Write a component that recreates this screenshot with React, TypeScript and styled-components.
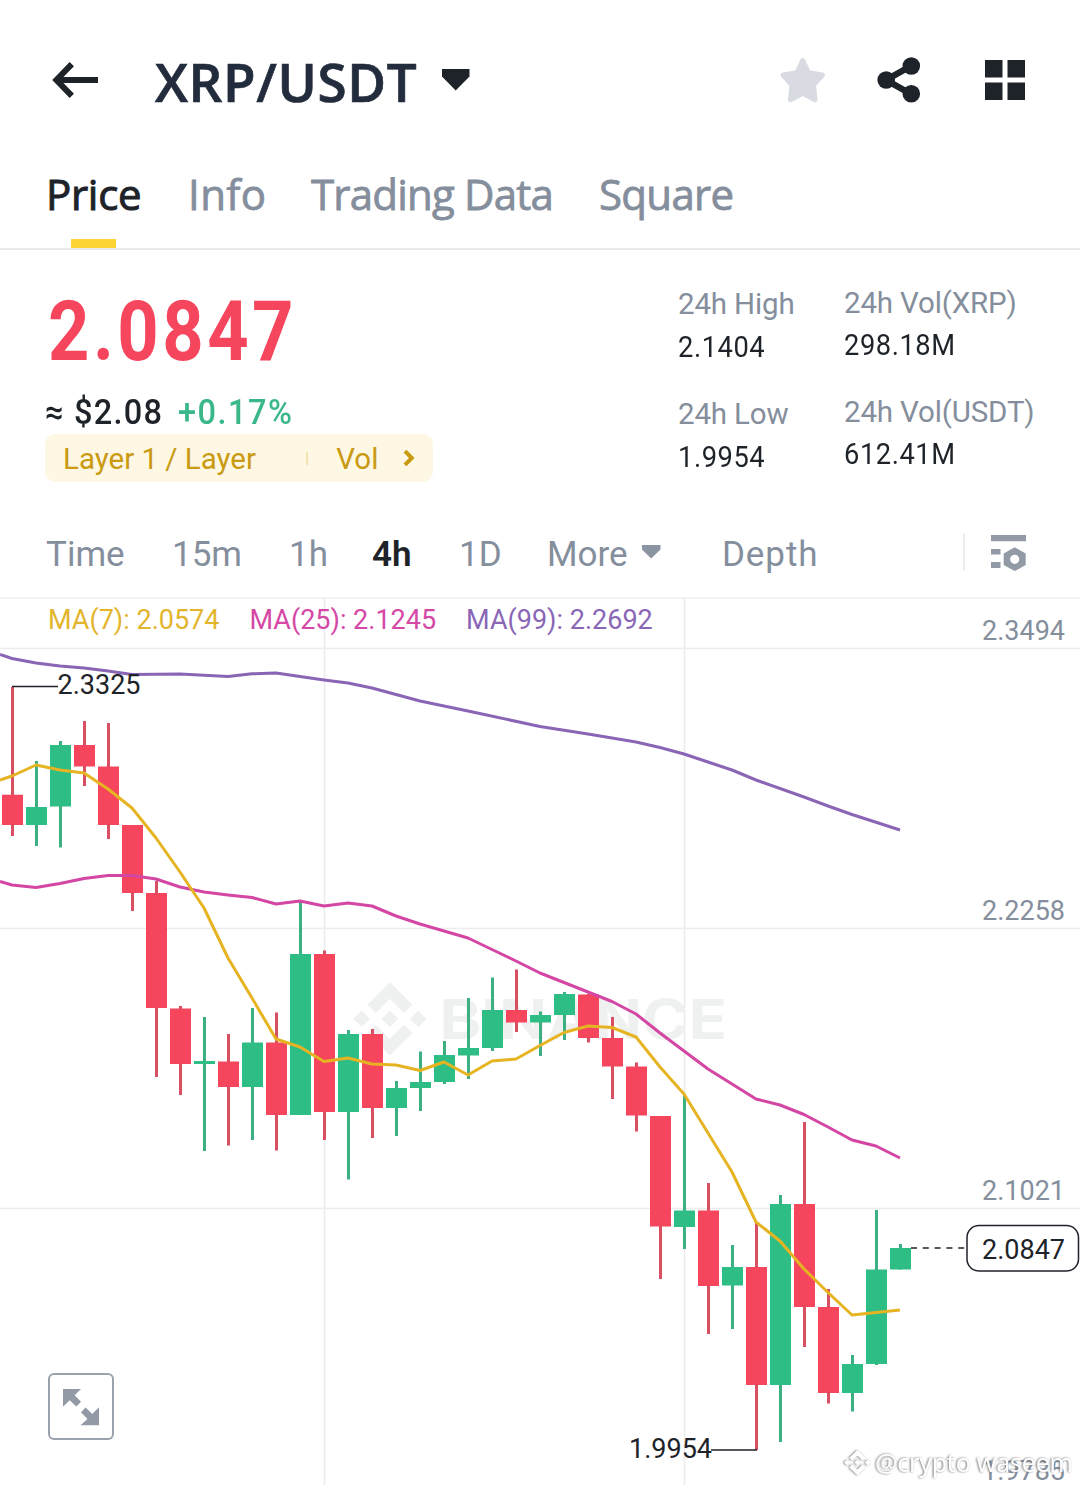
import React from "react";
import styled, { createGlobalStyle } from "styled-components";

const UP = "#2ebd85";
const DOWN = "#f6465d";
const INK = "#1e2329";
const MUTED = "#848e9c";

const GlobalStyle = createGlobalStyle`
  *, *::before, *::after { box-sizing: border-box; }
  html, body { margin: 0; padding: 0; background: #fff; }
`;

const Screen = styled.main`
  display: flex;
  flex-direction: column;
  width: 1080px;
  height: 1485px;
  overflow: hidden;
  background: #fff;
  color: ${INK};
  font-family: Roboto, "Liberation Sans", sans-serif;
  white-space: pre;
`;

const Header = styled.header`
  display: flex;
  align-items: center;
  height: 160px;
  padding: 0 54px 0 52px;
`;

const PairTitle = styled.h1`
  width: 269px;
  margin: 3px 18px 0 56px;
  font-family: "Open Sans", "Noto Sans", sans-serif;
  font-size: 53px;
  font-weight: 600;
  line-height: 72px;
  letter-spacing: 0.6px;
  color: #222c3c;
  -webkit-text-stroke: 0.7px #222c3c;
`;

const HeaderActions = styled.div`
  display: flex;
  align-items: center;
  gap: 51px;
  margin-left: auto;
  svg:last-child { margin-left: 12px; }
`;

const Tabs = styled.nav`
  display: flex;
  height: 90px;
  padding-left: 46px;
  border-bottom: 2px solid #e9eaec;
`;

const Tab = styled.div<{ $width: number; $active?: boolean; $spacing?: number }>`
  display: flex;
  flex: 0 0 ${(p) => p.$width}px;
  flex-direction: column;
  justify-content: space-between;
  font-family: "Open Sans", "Noto Sans", sans-serif;
  font-size: 42px;
  font-weight: 400;
  line-height: 67px;
  letter-spacing: ${(p) => p.$spacing ?? 0}px;
  color: ${(p) => (p.$active ? INK : MUTED)};
  -webkit-text-stroke: ${(p) => (p.$active ? 1 : 0.8)}px currentColor;
`;

const TabMarker = styled.span`
  width: 45px;
  height: 9px;
  margin-left: 25px;
  background: #fcd535;
`;

const Summary = styled.section`
  display: flex;
  height: 259px;
`;

const PriceColumn = styled.div`
  display: flex;
  flex-direction: column;
  align-items: flex-start;
  width: 678px;
  padding: 40px 0 0 45px;
`;

const LastPrice = styled.div`
  margin-left: 3px;
  font-size: 83px;
  font-weight: 700;
  line-height: 84px;
  letter-spacing: 4px;
  transform: scaleX(0.87);
  transform-origin: left center;
  color: ${DOWN};
`;

const FiatRow = styled.div`
  display: flex;
  height: 60px;
  padding-top: 17px;
  font-size: 35px;
  font-weight: 500;
  line-height: 44px;
`;

const FiatPrice = styled.span`
  width: 133px;
  letter-spacing: 1.3px;
  transform: scaleX(0.93);
  transform-origin: left center;
`;

const Change = styled.span`
  letter-spacing: 1.6px;
  color: #3bb88a;
  transform: scaleX(0.93);
  transform-origin: left center;
`;

const TagPill = styled.div`
  display: flex;
  align-items: center;
  width: 388px;
  height: 48px;
  padding: 0 18px;
  border-radius: 10px;
  background: #fef7e3;
  color: #c99a12;
  font-size: 29.5px;
  line-height: 46px;
`;

const TagName = styled.span`
  width: 244px;
  padding-top: 2px;
`;

const TagDivider = styled.span`
  width: 2px;
  height: 13px;
  margin-right: 28px;
  background: #f3e3b0;
`;

const TagMetric = styled.span`
  width: 67px;
  padding-top: 2px;
`;

const StatColumn = styled.dl<{ $width: number; $top: number; $valueHeight: number }>`
  width: ${(p) => p.$width}px;
  margin: 0;
  padding-top: ${(p) => p.$top}px;
  dd { line-height: ${(p) => p.$valueHeight}px; }
`;

const StatLabel = styled.dt`
  font-size: 29.5px;
  line-height: 44px;
  letter-spacing: -0.15px;
  color: ${MUTED};
`;

const StatValue = styled.dd`
  margin: 0 0 24px;
  font-size: 29.5px;
  letter-spacing: 0.6px;
  transform: scaleX(0.925);
  transform-origin: left center;
`;

const Toolbar = styled.div`
  display: flex;
  align-items: center;
  height: 90px;
  padding: 4px 53px 0 46px;
  border-bottom: 2px solid #f1f2f3;
  > svg { margin-top: -5px; }
`;

const Interval = styled.div<{ $width: number; $active?: boolean; $spacing?: number }>`
  display: flex;
  align-items: center;
  flex: 0 0 ${(p) => p.$width}px;
  font-size: 35px;
  font-weight: ${(p) => (p.$active ? 600 : 400)};
  line-height: 44px;
  letter-spacing: ${(p) => p.$spacing ?? 0}px;
  color: ${(p) => (p.$active ? INK : MUTED)};
  svg { margin: -6px 0 0 14px; }
`;

const ToolbarDivider = styled.span`
  width: 2px;
  height: 36px;
  margin: -6px 26px 0 auto;
  background: #eaecef;
`;

const ChartArea = styled.section`
  position: relative;
  height: 886px;
`;

const ChartSvg = styled.svg`
  display: block;
  font-family: Roboto, sans-serif;
`;

const Legend = styled.div`
  position: absolute;
  top: 5px;
  left: 48px;
  display: flex;
  gap: 30px;
  font-size: 27px;
  line-height: 32px;
`;

const LegendItem = styled.span<{ $color: string }>`
  color: ${(p) => p.$color};
`;

const ExpandButton = styled.button`
  position: absolute;
  top: 774px;
  left: 48px;
  display: grid;
  place-items: center;
  width: 66px;
  height: 67px;
  padding: 0;
  border: 2px solid #9aa2ad;
  border-radius: 6px;
  background: #fff;
`;

const BINANCE_MARK =
  "M16.624 13.9202l2.7175 2.7154-7.353 7.353-7.353-7.352 2.7175-2.7164 4.6355 4.6595 4.6356-4.6595zm4.6366-4.6366L24 12l-2.7154 2.7164L18.5682 12l2.6924-2.7164zm-9.272.001l2.7163 2.6914-2.7164 2.7174v-.001L9.2721 12l2.7164-2.7154zm-9.2722-.001L5.4088 12l-2.6914 2.6924L0 12l2.7164-2.7164zM11.9885.0115l7.353 7.329-2.7174 2.7154-4.6356-4.6356-4.6355 4.6595-2.7174-2.7154 7.353-7.353z";

// [rising, high, body top, body bottom, low] in chart pixels
type Candle = [boolean, number, number, number, number];
const candles: Candle[] = [
  [false, 687, 794.7, 825, 836],
  [true, 761, 807, 825, 846],
  [true, 741, 745, 806.5, 847.5],
  [false, 721, 745, 766.5, 786],
  [false, 723, 766.5, 825, 839],
  [false, 825, 825, 893, 911],
  [false, 881, 893, 1008, 1077],
  [false, 1006, 1008.5, 1064, 1095],
  [true, 1017, 1061, 1064, 1151],
  [false, 1034, 1061.5, 1087, 1145.5],
  [true, 1008, 1042.5, 1087, 1140],
  [false, 1012.5, 1042.5, 1115, 1150.5],
  [true, 902, 954, 1115, 1115],
  [false, 950.5, 954, 1112, 1140],
  [true, 1030, 1034, 1112, 1179.5],
  [false, 1029, 1034, 1108, 1138],
  [true, 1081, 1088, 1108, 1136],
  [true, 1051.5, 1082, 1088, 1111],
  [true, 1041, 1055, 1082, 1084],
  [true, 998, 1048, 1055.5, 1079],
  [true, 977.5, 1010, 1048, 1051],
  [false, 969.5, 1010, 1022.5, 1032],
  [true, 1011.5, 1015, 1022.5, 1056],
  [true, 992, 994, 1015, 1040],
  [false, 994, 994.5, 1038, 1042.5],
  [false, 1017, 1038, 1066.5, 1099],
  [false, 1062.5, 1066.5, 1115.5, 1131.5],
  [false, 1116, 1116, 1226.5, 1279],
  [true, 1095, 1210.5, 1227, 1249],
  [false, 1183, 1210.5, 1286, 1334],
  [true, 1245, 1267, 1285.5, 1329],
  [false, 1222, 1267, 1385, 1450],
  [true, 1195, 1204, 1385, 1442],
  [false, 1122, 1204, 1307, 1347],
  [false, 1289, 1307, 1393, 1403.5],
  [true, 1355, 1364, 1393, 1411.5],
  [true, 1210, 1269.5, 1364, 1365],
  [true, 1244, 1248, 1269.5, 1269.5],
];

const ma7 =
  "0,780 12,776 36,765 60,770 84,773 108,789 132,808 156,838 180,872 204,908 228,958 252,998 276,1039 300,1047 324,1061.5 348,1058 372,1064 396,1065 420,1070.5 444,1062 468,1075 492,1061 516,1059 540,1045.5 564,1032.5 588,1026 612,1027.5 636,1037 660,1067 684,1094 708,1133 732,1172 756,1222 780,1241 804,1269 828,1292.5 852,1315 876,1312.5 900,1310";
const ma25 =
  "0,881.5 12,885 36,887.5 60,883.5 84,878.5 108,875.5 132,875.5 156,879 180,887 204,892 228,895 252,897.5 276,904 300,901 324,906 348,903 372,906 396,916 420,924 444,931 468,938 492,949.5 516,961 540,973 564,982.5 588,992 612,1001.5 636,1014 660,1033 684,1051 708,1069 732,1084 756,1099 780,1105 804,1114.5 828,1127 852,1140 876,1146 900,1158";
const ma99 =
  "0,654.5 12,658.5 36,663 60,666 84,668 108,671 132,674.5 180,674 228,676.5 252,673.8 276,673 300,676.5 324,680 348,683 372,688 396,694.5 420,701 468,711 540,726.5 588,734 636,742 660,747.5 684,754 708,762 732,770 756,780 804,797 828,806 852,814.5 900,830";

const axisLabels: [string, number][] = [
  ["2.3494", 640],
  ["2.2258", 920],
  ["2.1021", 1200],
  ["1.9785", 1480],
];

function BackIcon() {
  return (
    <svg width="47" height="38" viewBox="52 61 47 38" fill="none" stroke={INK} strokeWidth="6">
      <path d="M98 80H57M71.8 64.2 56.4 80l15.4 15.8" />
    </svg>
  );
}

function StarIcon() {
  return (
    <svg width="46" height="46" viewBox="780 58 46 46" fill="#d8dbe1" stroke="#d8dbe1" strokeWidth="5" strokeLinejoin="round">
      <path d="M802.7 61.5 808.5 73.8 822.3 76 813.5 86 815 100.7 802.7 94.3 790.4 100.7 791.9 86 783.2 76 797 73.8Z" />
    </svg>
  );
}

function ShareIcon() {
  return (
    <svg width="44" height="46" viewBox="877 57 44 46" fill={INK}>
      <path d="M911 66 886 80l25 14" fill="none" stroke={INK} strokeWidth="6.5" />
      <circle cx="911.3" cy="66" r="8.8" />
      <circle cx="886.2" cy="80" r="8.8" />
      <circle cx="911.3" cy="93.8" r="8.8" />
    </svg>
  );
}

function GridIcon() {
  return (
    <svg width="42" height="42" viewBox="984 59 42 42" fill={INK}>
      <path d="M985 60h17.5v17.5H985zM1007.5 60h17.5v17.5h-17.5zM985 82.5h17.5V100H985zM1007.5 82.5h17.5V100h-17.5z" />
    </svg>
  );
}

function IndicatorIcon() {
  return (
    <svg width="36" height="38" viewBox="991 533 36 38" fill="#929aa6">
      <path d="M991 534h35v6.3h-35zM991 548h9.5v5.6H991zM991 561h9.5v6H991z" />
      <path fillRule="evenodd" d="m1014.7 546.3 11 6.1v11.6l-11 6.1-11-6.1v-11.6zm0 7.4a4.6 4.6 0 1 0 0 9.2 4.6 4.6 0 0 0 0-9.2z" />
    </svg>
  );
}

function Chart() {
  return (
    <ChartSvg width="1080" height="886" viewBox="0 599 1080 886">
      <g stroke="#ebecee" strokeWidth="1.6">
        <path d="M0 648.5H1080M0 928.5H1080M0 1208.5H1080M324.5 599V1485M684.5 599V1485" />
      </g>
      <g fill="#eff0f0">
        <path d={BINANCE_MARK} transform="translate(353.3 982.3) scale(3.05)" />
        <text x="439.5" y="1039" fontFamily="Inter, sans-serif" fontSize="55.5" fontWeight="700" textLength="287.5" lengthAdjust="spacingAndGlyphs">
          BINANCE
        </text>
      </g>
      {candles.map(([rising, high, top, bottom, low], i) => (
        <g key={i} fill={rising ? UP : DOWN}>
          <rect x={11 + 24 * i} y={high} width={3} height={low - high} fill={rising ? "#3cb083" : "#d84e63"} />
          <rect x={2 + 24 * i} y={top} width={21} height={bottom - top} />
        </g>
      ))}
      <g fill="none" strokeWidth="3" strokeLinejoin="round">
        <polyline points={ma99} stroke="#8a65b5" />
        <polyline points={ma25} stroke="#d446a4" />
        <polyline points={ma7} stroke="#e6b422" />
      </g>
      <g stroke={INK} strokeWidth="1.7" fill="none">
        <path d="M12 686.5H58M711 1450H757" />
        <path d="M911 1248H966" strokeDasharray="6 5.8" />
      </g>
      <g fontSize="27" fill={INK}>
        <text x="57.5" y="694">2.3325</text>
        <text x="629" y="1458">1.9954</text>
      </g>
      <g fontSize="27" fill={MUTED}>
        {axisLabels.map(([label, y]) => (
          <text key={label} x="982" y={y}>{label}</text>
        ))}
      </g>
      <rect x="967" y="1225.5" width="111.5" height="45.5" rx="12" fill="#fff" stroke={INK} strokeWidth="1.5" />
      <text x="982" y="1259" fontSize="27" fill={INK}>2.0847</text>
      <g fill="#fff" style={{ filter: "drop-shadow(-0.3px 0.5px 0.8px #777)" }}>
        <path d={BINANCE_MARK} transform="translate(844 1450) scale(1.12 1.05)" />
        <text x="875" y="1471.5" fontFamily="'Noto Sans', sans-serif" fontSize="25" textLength="198">
          @crypto waseem
        </text>
      </g>
    </ChartSvg>
  );
}

export default function App() {
  return (
    <>
      <GlobalStyle />
      <Screen>
        <Header>
          <BackIcon />
          <PairTitle>XRP/USDT</PairTitle>
          <svg width="28" height="22" viewBox="0 0 28 22" fill={INK}>
            <path d="M0 0h27.5v7.5L13.7 21.5 0 7.5z" />
          </svg>
          <HeaderActions>
            <StarIcon />
            <ShareIcon />
            <GridIcon />
          </HeaderActions>
        </Header>

        <Tabs>
          <Tab $width={142} $spacing={-0.3} $active>
            Price
            <TabMarker />
          </Tab>
          <Tab $width={123} $spacing={0.4}>Info</Tab>
          <Tab $width={288} $spacing={-0.8}>Trading Data</Tab>
          <Tab $width={160} $spacing={-0.7}>Square</Tab>
        </Tabs>

        <Summary>
          <PriceColumn>
            <LastPrice>2.0847</LastPrice>
            <FiatRow>
              <FiatPrice>≈ $2.08</FiatPrice>
              <Change>+0.17%</Change>
            </FiatRow>
            <TagPill>
              <TagName>Layer 1 / Layer</TagName>
              <TagDivider />
              <TagMetric>Vol</TagMetric>
              <svg width="12" height="18" viewBox="0 0 12 18" fill="none" stroke="#c99a12" strokeWidth="4">
                <path d="m2 2 6.8 7L2 16" />
              </svg>
            </TagPill>
          </PriceColumn>
          <StatColumn $width={166} $top={32} $valueHeight={42}>
            <StatLabel>24h High</StatLabel>
            <StatValue>2.1404</StatValue>
            <StatLabel>24h Low</StatLabel>
            <StatValue>1.9954</StatValue>
          </StatColumn>
          <StatColumn $width={230} $top={31} $valueHeight={41}>
            <StatLabel>24h Vol(XRP)</StatLabel>
            <StatValue>298.18M</StatValue>
            <StatLabel>24h Vol(USDT)</StatLabel>
            <StatValue>612.41M</StatValue>
          </StatColumn>
        </Summary>

        <Toolbar>
          <Interval $width={126}>Time</Interval>
          <Interval $width={117}>15m</Interval>
          <Interval $width={83}>1h</Interval>
          <Interval $width={87} $active>4h</Interval>
          <Interval $width={88}>1D</Interval>
          <Interval $width={175}>
            More
            <svg width="19" height="14" viewBox="0 0 19 14" fill="#8b95a1">
              <path d="M0 0h18.5v4.5L9.2 13.5 0 4.5z" />
            </svg>
          </Interval>
          <Interval $width={119} $spacing={0.9}>Depth</Interval>
          <ToolbarDivider />
          <IndicatorIcon />
        </Toolbar>

        <ChartArea>
          <Chart />
          <Legend>
            <LegendItem $color="#e3b52c">MA(7): 2.0574</LegendItem>
            <LegendItem $color="#d548a6">MA(25): 2.1245</LegendItem>
            <LegendItem $color="#8a67b6">MA(99): 2.2692</LegendItem>
          </Legend>
          <ExpandButton aria-label="Expand chart">
            <svg width="38" height="38" viewBox="62 1387 38 38" fill="#929aa6">
              <path d="M63 1388h18l-6.3 6.3 6.3 6.5-4.6 4.7-6.7-6.3-6.7 6.5zM99 1424.3H80.5l7-6.3-6.5-6.7 4.6-4.7 6.7 6.4 6.7-6.7z" />
            </svg>
          </ExpandButton>
        </ChartArea>
      </Screen>
    </>
  );
}
